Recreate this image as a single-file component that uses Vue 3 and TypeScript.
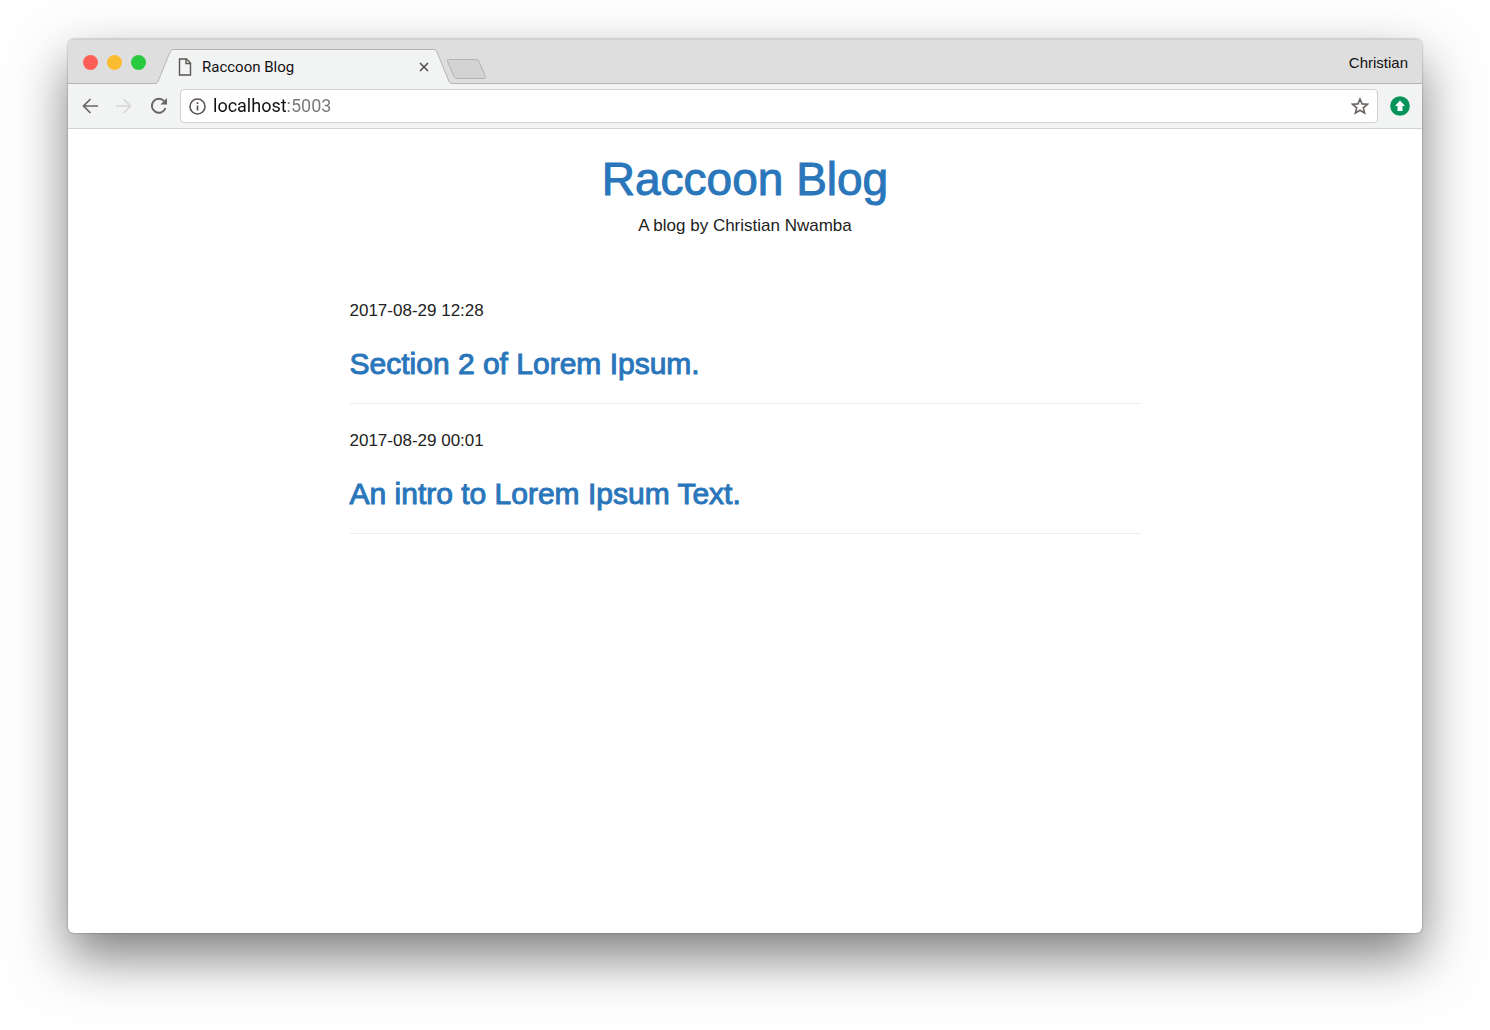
<script setup lang="ts">
import { ref } from 'vue'

interface Post {
  date: string
  title: string
  href: string
}

const address = ref('localhost:5003')

const posts: Post[] = [
  { date: '2017-08-29 12:28', title: 'Section 2 of Lorem Ipsum.', href: '#section-2' },
  { date: '2017-08-29 00:01', title: 'An intro to Lorem Ipsum Text.', href: '#intro' },
]
</script>

<template>
  <div class="desktop">
    <div class="window">
      <div class="titlebar">
        <div class="lights">
          <button class="light red" type="button" aria-label="Close window"></button>
          <button class="light yellow" type="button" aria-label="Minimise window"></button>
          <button class="light green" type="button" aria-label="Zoom window"></button>
        </div>
        <div class="tab">
          <svg width="18" height="35" viewBox="0 0 18 35" aria-hidden="true">
            <path d="M0 35V34.500Q2 34.500 3 32.500L15 3Q16 .5 18 .5V35Z" fill="#f2f3f3" />
            <path d="M0 34.500Q2 34.500 3 32.500L15 3Q16 .5 18 .5" fill="none" stroke="#b4b4b4" />
          </svg>
          <div class="tab-body">
            <svg width="14" height="18" viewBox="0 0 14 18" fill="none" stroke="#5c5653" stroke-width="1.400" aria-hidden="true">
              <path d="M1.500 1H8.500L12.500 5V17H1.500Z" />
              <path d="M8 1V5.500H12.500" />
            </svg>
            <span class="tab-title">Raccoon Blog</span>
            <button class="icon-btn" type="button" aria-label="Close tab">
              <svg width="10" height="10" viewBox="0 0 10 10" stroke="#4a4a4a" stroke-width="1.500">
                <path d="M1 1L9 9M9 1L1 9" />
              </svg>
            </button>
          </div>
          <svg width="18" height="35" viewBox="0 0 18 35" aria-hidden="true">
            <path d="M18 35V34.500Q16 34.500 15 32.500L3 3Q2 .5 0 .5V35Z" fill="#f2f3f3" />
            <path d="M18 34.500Q16 34.500 15 32.500L3 3Q2 .5 0 .5" fill="none" stroke="#b4b4b4" />
          </svg>
        </div>
        <button class="icon-btn new-tab" type="button" aria-label="New tab">
          <svg width="42" height="21" viewBox="0 0 42 21">
            <path d="M2.500 .5H30Q32 .5 33 2.500L39.500 17.500Q40 19.500 38 19.500H11Q9 19.500 8 17.500L1.500 2.500Q1 .5 2.500 .5Z" fill="#d3d3d3" stroke="#b3b3b3" />
          </svg>
        </button>
        <button class="profile" type="button">Christian</button>
      </div>

      <div class="toolbar">
        <div class="nav">
          <button class="icon-btn" type="button" aria-label="Back">
            <svg width="16" height="16" viewBox="0 0 16 16" fill="none" stroke="#6a6462" stroke-width="1.700">
              <path d="M16 8H1.500M8.500 1L1.500 8L8.500 15" />
            </svg>
          </button>
          <button class="icon-btn" type="button" aria-label="Forward" disabled>
            <svg width="16" height="16" viewBox="0 0 16 16" fill="none" stroke="#d6d6d6" stroke-width="1.700">
              <path d="M0 8H14.500M7.500 1L14.500 8L7.500 15" />
            </svg>
          </button>
          <button class="icon-btn" type="button" aria-label="Reload">
            <svg width="18" height="18" viewBox="0 0 18 18">
              <path d="M15.500 11A7 7 0 1 1 14.200 4.200" fill="none" stroke="#6a6462" stroke-width="1.900" />
              <path d="M17 1V7.500H10.500Z" fill="#6a6462" />
            </svg>
          </button>
        </div>
        <div class="omnibox">
          <svg width="17" height="17" viewBox="0 0 17 17" aria-hidden="true">
            <circle cx="8.500" cy="8.500" r="7.500" fill="none" stroke="#5c5653" stroke-width="1.600" />
            <path d="M8.500 4.300V6M8.500 7.500V12.500" stroke="#5c5653" stroke-width="1.700" />
          </svg>
          <input v-model="address" class="address" type="text" aria-label="Address" spellcheck="false" />
          <button class="icon-btn" type="button" aria-label="Bookmark this page">
            <svg width="18" height="18" viewBox="0 0 18 18" fill="none" stroke="#6a6462" stroke-width="1.600">
              <path d="M9 2L11 6.900L16.400 7.300L12.300 10.800L13.600 16L9 13.200L4.400 16L5.700 10.800L1.600 7.300L7 6.900Z" />
            </svg>
          </button>
        </div>
        <button class="icon-btn" type="button" aria-label="Update available">
          <svg width="20" height="20" viewBox="0 0 20 20">
            <circle cx="10" cy="10" r="9.800" fill="#06945a" />
            <path d="M10 4.500L15 10H12.500V15H7.500V10H5Z" fill="#fff" />
          </svg>
        </button>
      </div>

      <main class="page">
        <header class="masthead">
          <h1><a href="#home">Raccoon Blog</a></h1>
          <p>A blog by Christian Nwamba</p>
        </header>
        <article v-for="post in posts" :key="post.href" class="post">
          <time>{{ post.date }}</time>
          <h2><a :href="post.href">{{ post.title }}</a></h2>
        </article>
      </main>
    </div>
  </div>
</template>

<style>
body {
  margin: 0;
  background: #fefefe;
}
</style>

<style scoped>
.desktop {
  box-sizing: border-box;
  min-height: 100vh;
  display: flex;
  padding: 39px 68px 97px;
  font-family: "Liberation Sans", Arial, sans-serif;
  color: #222;
  overflow: hidden;
}
.window {
  flex: 1;
  min-width: 0;
  display: flex;
  flex-direction: column;
  border-radius: 6px;
  overflow: hidden;
  background: #fff;
  box-shadow: 0 0 2px rgba(0, 0, 0, 0.4), 0 24px 52px rgba(0, 0, 0, 0.5);
}
button {
  margin: 0;
  padding: 0;
  border: 0;
  background: none;
  font: inherit;
  color: inherit;
}
svg {
  display: block;
  flex: none;
}
.icon-btn {
  flex: none;
}
.titlebar {
  display: flex;
  align-items: flex-end;
  height: 45px;
  background: linear-gradient(#b4b4b4, #b4b4b4) bottom / 100% 1px no-repeat, #dedede;
  box-shadow: inset 0 1px #d0d0d0;
}
.lights {
  display: flex;
  gap: 9px;
  padding: 0 9px 14px 15px;
}
.light {
  width: 15px;
  height: 15px;
  border-radius: 50%;
}
.red { background: #fd5f57; }
.yellow { background: #fcbc30; }
.green { background: #29c940; }
.tab {
  display: flex;
  flex: 0 1 297px;
  height: 35px;
}
.tab-body {
  box-sizing: border-box;
  flex: 1;
  display: flex;
  align-items: center;
  padding: 0 5px;
  border-top: 1px solid #b4b4b4;
  background: #f2f3f3;
}
.tab-title {
  flex: 1;
  padding-left: 10px;
  font: 15px/18px Roboto, sans-serif;
  color: #111;
}
.new-tab {
  margin: 0 auto 4px -6px;
}
.profile {
  padding: 0 14px 12px;
  font-size: 15px;
  line-height: 18px;
  color: #111;
}
.toolbar {
  display: flex;
  align-items: center;
  gap: 12px;
  height: 44px;
  padding: 0 12px 0 14px;
  border-bottom: 1px solid #d2d2d2;
  background: #f2f3f3;
}
.nav {
  display: flex;
  align-items: center;
  gap: 18px;
}
.omnibox {
  box-sizing: border-box;
  flex: 1;
  display: flex;
  align-items: center;
  height: 34px;
  padding: 0 8px;
  border: 1px solid #d0d0d0;
  border-radius: 4px;
  background: #fff;
}
/* The host part of the address is dark, the port is grey. */
.address {
  flex: 1;
  min-width: 0;
  margin: 0 0 0 7px;
  padding: 0;
  border: 0;
  outline: 0;
  font: 18px/24px Roboto, sans-serif;
  color: #111;
  background: linear-gradient(90deg, #111 74px, #777 74px);
  -webkit-background-clip: text;
  background-clip: text;
  -webkit-text-fill-color: transparent;
}
.page {
  box-sizing: border-box;
  width: 100%;
  max-width: 791px;
  margin: 0 auto;
  padding: 24px 0;
}
a {
  color: #2a76bb;
  text-decoration: none;
  -webkit-text-stroke: 1px #2a76bb;
}
h1 {
  margin: 0;
  font-size: 46px;
  line-height: 52px;
  font-weight: 400;
}
.masthead {
  padding-bottom: 36px;
  text-align: center;
}
.masthead p {
  margin: 9px 0 0;
  font-size: 17px;
  line-height: 24px;
}
.post {
  padding: 25px 0 21px;
  border-bottom: 1px solid #eceeee;
}
.post time {
  display: block;
  font-size: 17px;
  line-height: 24px;
}
h2 {
  margin: 23px 0 0;
  font-size: 30px;
  line-height: 36px;
  font-weight: 400;
}
</style>
